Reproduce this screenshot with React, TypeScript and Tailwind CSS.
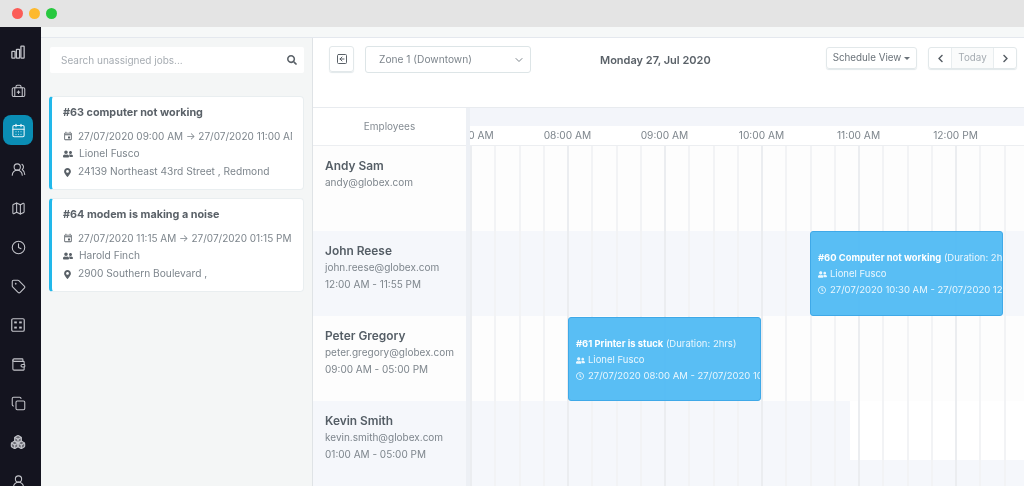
import { BriefcaseMedical, CalendarDays, ChevronDown, Clock, Copy, Map, Tag, UserRound, UsersRound, Wallet, Boxes, SquareArrowLeft, LucideIcon } from 'lucide-react'
import { FaChevronLeft, FaChevronRight, FaMapMarkerAlt, FaRegClock, FaSearch, FaUserFriends } from 'react-icons/fa'
import { MdOutlineEvent } from 'react-icons/md'

const FONT = "font-['Inter','Noto_Sans',sans-serif]"

function BarsIcon() {
  return (
    <svg width="14" height="14" viewBox="0 0 13 13" fill="none" stroke="currentColor" strokeWidth="1.2">
      <rect x="0.8" y="6" width="3" height="6.2" rx="0.5" />
      <rect x="5" y="4" width="3" height="8.2" rx="0.5" />
      <rect x="9.2" y="1" width="3" height="11.2" rx="0.5" />
    </svg>
  )
}

function TilesIcon() {
  return (
    <svg width="14" height="14" viewBox="0 0 13 13" fill="none" stroke="currentColor" strokeWidth="1.1">
      <rect x="0.7" y="0.7" width="11.6" height="11.6" rx="1.2" />
      <rect x="3" y="3.2" width="2.4" height="1.8" fill="currentColor" stroke="none" />
      <rect x="7.6" y="3.2" width="2.4" height="1.8" fill="currentColor" stroke="none" />
      <rect x="3" y="8" width="2.4" height="1.8" fill="currentColor" stroke="none" />
      <rect x="7.6" y="8" width="2.4" height="1.8" fill="currentColor" stroke="none" />
    </svg>
  )
}

function SideIcon({ icon: Icon }: { icon: LucideIcon }) {
  return <Icon size={15} strokeWidth={1.7} />
}

const navItems = [
  <BarsIcon />,
  <SideIcon icon={BriefcaseMedical} />,
  <SideIcon icon={CalendarDays} />,
  <SideIcon icon={UsersRound} />,
  <SideIcon icon={Map} />,
  <SideIcon icon={Clock} />,
  <SideIcon icon={Tag} />,
  <TilesIcon />,
  <SideIcon icon={Wallet} />,
  <SideIcon icon={Copy} />,
  <Boxes size={16} strokeWidth={1.7} className="fill-[#c3c4ca]/50" />,
  <SideIcon icon={UserRound} />,
]

const jobs = [
  {
    title: '#63 computer not working',
    time: '27/07/2020 09:00 AM → 27/07/2020 11:00 AM',
    who: 'Lionel Fusco',
    where: '24139 Northeast 43rd Street , Redmond',
  },
  {
    title: '#64 modem is making a noise',
    time: '27/07/2020 11:15 AM → 27/07/2020 01:15 PM',
    who: 'Harold Finch',
    where: '2900 Southern Boulevard ,',
  },
]

const employees = [
  { name: 'Andy Sam', email: 'andy@globex.com', hours: '' },
  { name: 'John Reese', email: 'john.reese@globex.com', hours: '12:00 AM - 11:55 PM' },
  { name: 'Peter Gregory', email: 'peter.gregory@globex.com', hours: '09:00 AM - 05:00 PM' },
  { name: 'Kevin Smith', email: 'kevin.smith@globex.com', hours: '01:00 AM - 05:00 PM' },
]

const hours = ['07:00 AM', '08:00 AM', '09:00 AM', '10:00 AM', '11:00 AM', '12:00 PM', '01:00 PM']

function JobCard({ job }: { job: (typeof jobs)[number] }) {
  return (
    <div className="h-[94px] rounded-[4px] border border-[#e9eef0] border-l-[3px] border-l-[#22b8ea] bg-white pl-[11px] pr-[11px] pt-[9px] text-[10.2px] text-[#7d858c]">
      <div className="text-[10.8px] leading-[14px] font-bold text-[#5a6168]">{job.title}</div>
      <div className="mt-[7px] flex h-[18px] items-center overflow-hidden whitespace-nowrap text-[10px]">
        <MdOutlineEvent size={10} className="mr-[5px] shrink-0 text-[#5a6168]" />
        {job.time}
      </div>
      <div className="flex h-[18px] items-center whitespace-nowrap">
        <FaUserFriends size={10} className="mr-[6px] shrink-0 text-[#5a6168]" />
        {job.who}
      </div>
      <div className="flex h-[18px] items-center whitespace-nowrap">
        <FaMapMarkerAlt size={9} className="mr-[6px] shrink-0 text-[#5a6168]" />
        {job.where}
      </div>
    </div>
  )
}

function EventCard({ className, title, duration, time }: { className: string; title: string; duration: string; time: string }) {
  return (
    <div className={`absolute z-10 w-[193px] overflow-hidden whitespace-nowrap rounded-[3px] border border-[#3fa9e8] bg-[#50bbf3]/95 pl-[7px] pt-[18px] text-[9.5px] text-[#eaf7fe] ${className}`}>
      <div className="leading-[16px]">
        <span className="text-[9.4px] font-bold text-white">{title}</span> {duration}
      </div>
      <div className="flex h-[16px] items-center">
        <FaUserFriends size={9} className="mr-[3px] shrink-0" />
        Lionel Fusco
      </div>
      <div className="flex h-[16px] items-center">
        <FaRegClock size={8} className="mr-[4px] shrink-0" />
        {time}
      </div>
    </div>
  )
}

export default function App() {
  return (
    <div className={`${FONT} flex h-[486px] w-[1024px] flex-col overflow-hidden bg-white blur-[0.4px]`}>
      {/* window chrome */}
      <div className="flex h-[27px] shrink-0 items-center gap-[6px] bg-[#e4e4e4] pl-[12px]">
        <span className="h-[11px] w-[11px] rounded-full bg-[#fb5c57]" />
        <span className="h-[11px] w-[11px] rounded-full bg-[#fdb92e]" />
        <span className="h-[11px] w-[11px] rounded-full bg-[#27c83f]" />
      </div>

      <div className="flex min-h-0 flex-1">
        {/* sidebar */}
        <div className="flex w-[41px] shrink-0 flex-col items-center gap-[9px] bg-[#14141f] pt-[10px] pr-[5px] text-[#c3c4ca]">
          {navItems.map((icon, i) => (
            <div
              key={i}
              className={`flex h-[30px] w-[30px] shrink-0 items-center justify-center rounded-[8px] ${i === 2 ? 'bg-[#0a8db4] text-[#e8f6fb]' : ''}`}
            >
              {icon}
            </div>
          ))}
        </div>

        <div className="flex min-w-0 flex-1 flex-col">
          <div className="h-[11px] shrink-0 border-b border-[#e4e8ee] bg-[#f6f8f8]" />

          <div className="flex min-h-0 flex-1">
            {/* unassigned jobs */}
            <div className="flex w-[272px] shrink-0 flex-col gap-[8px] border-r border-[#dfe3e6] bg-[#f4f6f6] pl-[8px] pr-[8px] pt-[9px]">
              <div className="mb-[15px] ml-[1px] flex h-[26px] items-center justify-between rounded-[2px] bg-white pl-[11px] pr-[7px] text-[10px] text-[#a6acb2]">
                Search unassigned jobs...
                <FaSearch size={10} className="text-[#5a6168]" />
              </div>
              {jobs.map((job) => (
                <JobCard key={job.title} job={job} />
              ))}
            </div>

            {/* schedule */}
            <div className="flex min-w-0 flex-1 flex-col">
              <div className="flex h-[69px] shrink-0 items-start pl-[16px] pt-[8px] text-[#7d858c]">
                <div className="flex h-[26px] w-[25px] items-center justify-center rounded-[3px] border border-[#e2e8ea] shadow-[0_1px_1px_#e2e8ea]">
                  <SquareArrowLeft size={12} className="text-[#5a6168]" />
                </div>
                <div className="ml-[11px] flex h-[27px] w-[166px] items-center justify-between rounded-[3px] border border-[#dde5e7] pl-[13px] pr-[5px] text-[10.2px]">
                  Zone 1 (Downtown)
                  <ChevronDown size={12} />
                </div>
                <div className="ml-[69px] w-[226px] pt-[6px] text-[11px] font-semibold text-[#5a6168]">Monday 27, Jul 2020</div>
                <div className="mt-[1px] flex h-[22px] w-[91px] items-center justify-center gap-[3px] rounded-[3px] border border-[#e2e8ea] text-[9.8px] text-[#6a7279] shadow-[0_1px_1px_#e2e8ea]">
                  Schedule View
                  <span className="mt-[1px] h-0 w-0 border-x-[3px] border-t-[3px] border-x-transparent border-t-[#6a7279]" />
                </div>
                <div className="mt-[1px] ml-[11px] flex h-[22px] w-[89px] items-center rounded-[3px] border border-[#e2e8ea] text-[9.8px] text-[#a6acb2] shadow-[0_1px_1px_#e2e8ea]">
                  <div className="flex h-full w-[23px] items-center justify-center border-r border-[#e8edef] text-[#555c63]">
                    <FaChevronLeft size={9} />
                  </div>
                  <div className="flex h-full flex-1 items-center justify-center bg-[#fafbfb]">Today</div>
                  <div className="flex h-full w-[23px] items-center justify-center border-l border-[#e8edef] text-[#555c63]">
                    <FaChevronRight size={9} />
                  </div>
                </div>
              </div>

              <div className="flex min-h-0 flex-1 border-t border-[#e8ebef]">
                {/* employees */}
                <div className="w-[153px] shrink-0">
                  <div className="flex h-[38px] items-center justify-center border-b border-[#eceef1] text-[10px] text-[#858c93]">Employees</div>
                  {employees.map((e, i) => (
                    <div
                      key={e.name}
                      className={`h-[85px] pl-[12px] pt-[12px] text-[10px] leading-[17px] text-[#7d858c] ${i % 2 === 1 ? 'bg-[#f5f7fb]' : 'bg-[#fdfdfd]'}`}
                    >
                      <div className="text-[11.9px] leading-[16px] font-semibold text-[#555e66]">{e.name}</div>
                      <div>{e.email}</div>
                      {e.hours && <div>{e.hours}</div>}
                    </div>
                  ))}
                </div>

                <div className="w-[4px] shrink-0 bg-[#edf0f5]" />

                {/* timeline */}
                <div className="min-w-0 flex-1 overflow-hidden">
                  <div className="h-[18px] bg-[#f3f5fa]" />
                  <div className="flex h-[20px] border-b border-[#eceef1] bg-white text-[10.2px] text-[#7d858c]">
                    <div className="-ml-[48px] flex">
                      {hours.map((h) => (
                        <div key={h} className="w-[97px] shrink-0 text-center leading-[19px]">{h}</div>
                      ))}
                    </div>
                  </div>
                  <div className="relative">
                    {employees.map((e, i) => (
                      <div key={e.name} className={`h-[85px] ${i % 2 === 1 ? 'bg-[#f5f7fb]' : 'bg-[#fdfdfd]'}`} />
                    ))}
                    <div className="absolute bottom-[26px] right-0 h-[59px] w-[174px] bg-white" />
                    <div className="absolute inset-0 flex">
                      {Array.from({ length: 24 }, (_, i) => (
                        <div
                          key={i}
                          className={`w-[24.25px] shrink-0 border-l-[2px] ${i % 4 === 0 ? 'border-[#ebedf0]' : 'border-[#f2f3f5]'}`}
                        />
                      ))}
                    </div>
                    <EventCard
                      className="left-[340px] top-[85px] h-[85px]"
                      title="#60 Computer not working"
                      duration="(Duration: 2hrs)"
                      time="27/07/2020 10:30 AM - 27/07/2020 12:30 PM"
                    />
                    <EventCard
                      className="left-[98px] top-[171px] h-[84px]"
                      title="#61 Printer is stuck"
                      duration="(Duration: 2hrs)"
                      time="27/07/2020 08:00 AM - 27/07/2020 10:00 AM"
                    />
                  </div>
                </div>
              </div>
            </div>
          </div>
        </div>
      </div>
    </div>
  )
}
